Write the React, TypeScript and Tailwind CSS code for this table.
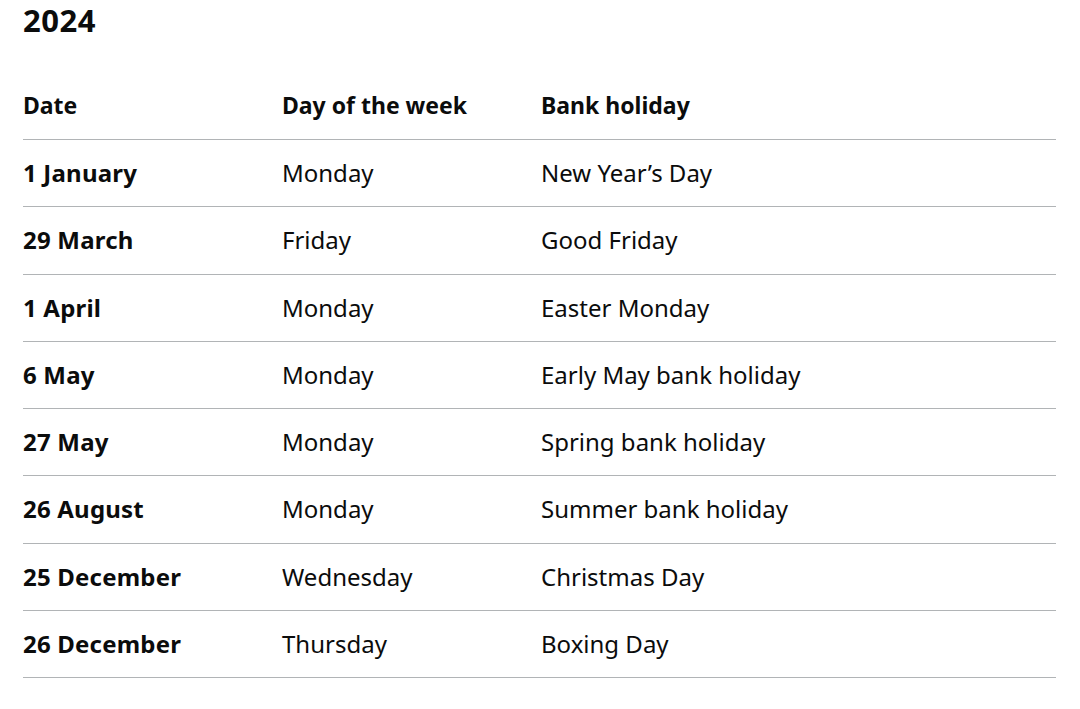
import React from "react";

const rows = [
  ["1 January", "Monday", "New Year’s Day"],
  ["29 March", "Friday", "Good Friday"],
  ["1 April", "Monday", "Easter Monday"],
  ["6 May", "Monday", "Early May bank holiday"],
  ["27 May", "Monday", "Spring bank holiday"],
  ["26 August", "Monday", "Summer bank holiday"],
  ["25 December", "Wednesday", "Christmas Day"],
  ["26 December", "Thursday", "Boxing Day"],
];

export default function App() {
  return (
    <div
      className="bg-white text-[#0b0c0c] px-[23px] w-[1080px] h-[709px] overflow-hidden"
      style={{ fontFamily: '"Noto Sans", Arial, sans-serif' }}
    >
      <div className="h-[72px]">
        <h2 className="text-[31px] font-bold leading-[40px] tracking-[0.5px]">2024</h2>
      </div>
      <div className="w-[1033px]">
        <div className="grid grid-cols-[259px_259px_1fr] items-center h-[68px] border-b border-[#b1b4b6] text-[23px] font-bold">
          <div>Date</div>
          <div>Day of the week</div>
          <div>Bank holiday</div>
        </div>
        {rows.map((r) => (
          <div
            key={r[0]}
            className="grid grid-cols-[259px_259px_1fr] items-center h-[67.25px] border-b border-[#b1b4b6] text-[24px]"
          >
            <div className="font-bold tracking-[0.2px]">{r[0]}</div>
            <div>{r[1]}</div>
            <div>{r[2]}</div>
          </div>
        ))}
      </div>
    </div>
  );
}
